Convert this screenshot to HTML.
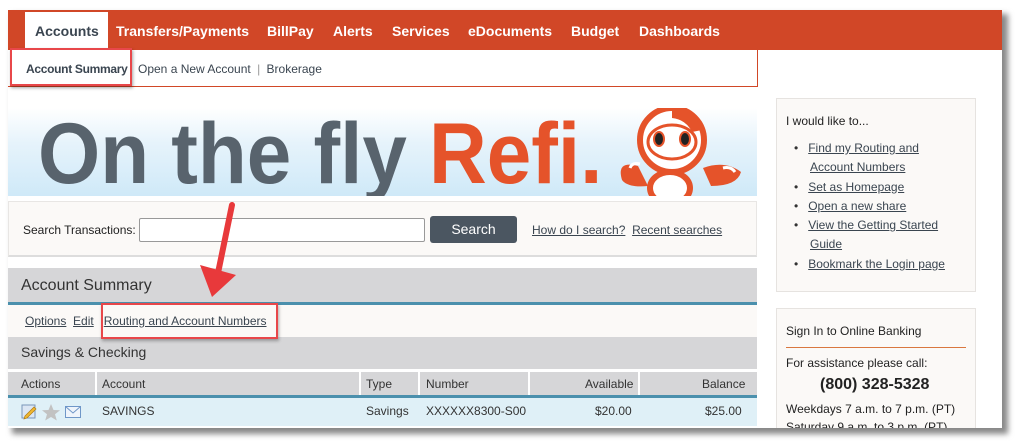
<!DOCTYPE html>
<html><head><meta charset="utf-8"><style>
*{margin:0;padding:0;box-sizing:border-box}
body{width:1016px;height:442px;background:#fff;font-family:"Liberation Sans",sans-serif;position:relative;overflow:hidden;color:#333}
.abs{position:absolute}
a{color:#3a4550;text-decoration:underline}
</style></head><body>
<div class="abs" style="left:12px;top:14px;width:996px;height:420px;background:#888;filter:blur(3px)"></div>
<div class="abs" style="left:8px;top:10px;width:994px;height:418px;background:#fff"></div>
<div class="abs" style="left:8px;top:10px;width:994px;height:40px;background:#d14727"></div>
<div class="abs" style="left:25px;top:12px;width:83px;height:38px;background:#fff"></div>
<div class="abs" style="left:0;top:23px;font-size:14px;font-weight:bold;color:#fff;white-space:nowrap">
<span class="abs" style="left:35px;color:#3a4550">Accounts</span>
<span class="abs" style="left:116px">Transfers/Payments</span>
<span class="abs" style="left:267px">BillPay</span>
<span class="abs" style="left:333px">Alerts</span>
<span class="abs" style="left:392px">Services</span>
<span class="abs" style="left:468px">eDocuments</span>
<span class="abs" style="left:571px">Budget</span>
<span class="abs" style="left:639px">Dashboards</span>
</div>
<div class="abs" style="left:8px;top:50px;width:750px;height:37px;border-right:1px solid #d14727;border-bottom:1px solid #d14727"></div>
<div class="abs" style="left:10px;top:48px;width:122px;height:38px;border:2px solid #e8474a;box-shadow:1px 2px 3px rgba(0,0,0,.35)"></div>
<div class="abs" style="left:26px;top:62px;font-size:12px;font-weight:bold;color:#3a4550;letter-spacing:-0.3px">Account Summary</div>
<div class="abs" style="left:138px;top:62px;font-size:12px;color:#3a4550;white-space:nowrap">Open a New Account <span style="color:#999;margin:0 3px">|</span> Brokerage</div>
<div class="abs" style="left:8px;top:108px;width:749px;height:88px;background:linear-gradient(#fff 0%,#e6f3fb 40%,#cfe9f8 100%);overflow:hidden">
<div class="abs" style="left:30px;top:-4px;font-size:86px;font-weight:bold;color:#58636d;white-space:nowrap;transform:scaleX(.93);transform-origin:left;line-height:100px">On the fly <span style="color:#e5532a">Refi.</span></div>
<svg class="abs" style="left:600px;top:-10px" width="149" height="98">
<ellipse cx="62" cy="90" rx="20" ry="16" fill="#fff" stroke="#e5532a" stroke-width="6"/>
<path d="M30 68 q-22 -6 -16 14 q6 8 26 6z" fill="#e5532a"/><path d="M95 70 q22 -8 38 4 q-4 14 -30 14z" fill="#e5532a"/>
<path d="M22 70 q2 -6 10 -4" stroke="#fff" stroke-width="3" fill="none"/><path d="M115 70 q8 -2 12 4" stroke="#fff" stroke-width="3" fill="none"/>
<circle cx="64" cy="42" r="32" fill="#fff" stroke="#e5532a" stroke-width="6"/>
<path d="M64 10 a32 32 0 0 1 30 22 l-10 2 a24 24 0 0 0 -20 -14z" fill="#e5532a"/>
<ellipse cx="64" cy="44" rx="24" ry="17" fill="none" stroke="#e5532a" stroke-width="3"/>
<ellipse cx="51" cy="41" rx="5" ry="7" fill="#222" stroke="#e5532a" stroke-width="2"/>
<ellipse cx="77" cy="41" rx="5" ry="7" fill="#222" stroke="#e5532a" stroke-width="2"/>
<rect x="51" y="2" width="3" height="10" fill="#e5532a"/>
</svg>
</div>
<div class="abs" style="left:8px;top:201px;width:749px;height:56px;background:#fbf9f7;border:1px solid #e8e6e4;border-bottom:2px solid #ddd"></div>
<div class="abs" style="left:23px;top:223px;font-size:12px;color:#222">Search Transactions:</div>
<div class="abs" style="left:139px;top:218px;width:286px;height:24px;background:#fff;border:1px solid #999;border-radius:2px"></div>
<div class="abs" style="left:430px;top:216px;width:87px;height:27px;background:#4b5661;border-radius:3px;color:#fff;font-size:14px;text-align:center;line-height:27px">Search</div>
<div class="abs" style="left:532px;top:223px;font-size:12px"><a>How do I search?</a>&nbsp; <a>Recent searches</a></div>
<div class="abs" style="left:8px;top:268px;width:749px;height:37px;background:#d6d6d8;border-bottom:3px solid #4b90ad"></div>
<div class="abs" style="left:21px;top:277px;font-size:16px;color:#333">Account Summary</div>
<div class="abs" style="left:8px;top:305px;width:749px;height:32px;background:#fbf9f7"></div>
<div class="abs" style="left:25px;top:314px;font-size:12px;white-space:nowrap"><a>Options</a>&nbsp;&nbsp;<a>Edit</a>&nbsp;&nbsp;&nbsp;<a>Routing and Account Numbers</a></div>
<div class="abs" style="left:8px;top:337px;width:749px;height:32px;background:#d6d6d8"></div>
<div class="abs" style="left:101px;top:303px;width:177px;height:36px;border:2px solid #e8474a;box-shadow:1px 2px 3px rgba(0,0,0,.3)"></div>
<div class="abs" style="left:21px;top:344px;font-size:14px;color:#333">Savings &amp; Checking</div>
<div class="abs" style="left:8px;top:372px;width:749px;height:26px;background:#d6d6d8;border-bottom:3px solid #4b90ad"></div>
<div class="abs" style="left:95px;top:372px;width:2px;height:23px;background:#fff"></div>
<div class="abs" style="left:359px;top:372px;width:2px;height:23px;background:#fff"></div>
<div class="abs" style="left:418px;top:372px;width:2px;height:23px;background:#fff"></div>
<div class="abs" style="left:528px;top:372px;width:2px;height:23px;background:#fff"></div>
<div class="abs" style="left:638px;top:372px;width:2px;height:23px;background:#fff"></div>
<div class="abs" style="left:0;top:377px;font-size:12px;color:#333;white-space:nowrap">
<span class="abs" style="left:21px">Actions</span><span class="abs" style="left:102px">Account</span><span class="abs" style="left:366px">Type</span><span class="abs" style="left:426px">Number</span><span class="abs" style="left:585px">Available</span><span class="abs" style="left:702px">Balance</span></div>
<div class="abs" style="left:8px;top:398px;width:749px;height:28px;background:#dff0f7"></div>
<svg class="abs" style="left:21px;top:403px" width="64" height="18">
<rect x="1" y="2" width="13" height="13" fill="#dbe6f3" stroke="#7a96b8"/>
<path d="M4 13 L13 4 L15 6 L6 15 L3 16Z" fill="#f0b830" stroke="#b07a10" stroke-width=".7"/>
<path d="M30 1 L32.5 7 L39 7.3 L34 11.3 L35.8 17.5 L30 14 L24.2 17.5 L26 11.3 L21 7.3 L27.5 7Z" fill="#c2c2c2"/>
<rect x="44.5" y="3.5" width="15" height="11" fill="#eef4fb" stroke="#6f97c8"/>
<path d="M44.5 3.5 L52 10 L59.5 3.5" fill="none" stroke="#6f97c8"/>
</svg>
<div class="abs" style="left:0;top:404px;font-size:12px;color:#333;white-space:nowrap">
<span class="abs" style="left:102px">SAVINGS</span><span class="abs" style="left:366px">Savings</span><span class="abs" style="left:426px">XXXXXX8300-S00</span><span class="abs" style="left:595px">$20.00</span><span class="abs" style="left:705px">$25.00</span></div>
<div class="abs" style="left:776px;top:98px;width:200px;height:194px;background:#fbf9f7;border:1px solid #e6e3e0"></div>
<div class="abs" style="left:786px;top:114px;font-size:12px;color:#222">I would like to...</div>
<div class="abs" style="left:794px;top:139px;font-size:12px;line-height:19.3px">
<div>•&nbsp;&nbsp; <a>Find my Routing and</a></div>
<div style="padding-left:16px"><a>Account Numbers</a></div>
<div>•&nbsp;&nbsp; <a>Set as Homepage</a></div>
<div>•&nbsp;&nbsp; <a>Open a new share</a></div>
<div>•&nbsp;&nbsp; <a>View the Getting Started</a></div>
<div style="padding-left:16px"><a>Guide</a></div>
<div>•&nbsp;&nbsp; <a>Bookmark the Login page</a></div>
</div>
<div class="abs" style="left:776px;top:308px;width:200px;height:120px;background:#fbf9f7;border:1px solid #e6e3e0;border-bottom:none"></div>
<div class="abs" style="left:786px;top:324px;font-size:12px;color:#222">Sign In to Online Banking</div>
<div class="abs" style="left:786px;top:347px;width:180px;height:1px;background:#d9773f"></div>
<div class="abs" style="left:786px;top:356px;font-size:12px;color:#222">For assistance please call:</div>
<div class="abs" style="left:820px;top:376px;font-size:16px;font-weight:bold;color:#222">(800) 328-5328</div>
<div class="abs" style="left:786px;top:402px;font-size:12px;color:#222;white-space:nowrap">Weekdays 7 a.m. to 7 p.m. (PT)</div>
<div class="abs" style="left:786px;top:420px;width:190px;height:8px;overflow:hidden"><div style="font-size:12px;color:#222;white-space:nowrap">Saturday 9 a.m. to 3 p.m. (PT)</div></div>
<svg class="abs" style="left:190px;top:195px" width="60" height="110">
<line x1="42" y1="10" x2="28" y2="78" stroke="#e8393b" stroke-width="6" stroke-linecap="round"/>
<path d="M10 70 L46 80 L22 102 Z" fill="#e8393b"/>
</svg>
</body></html>
